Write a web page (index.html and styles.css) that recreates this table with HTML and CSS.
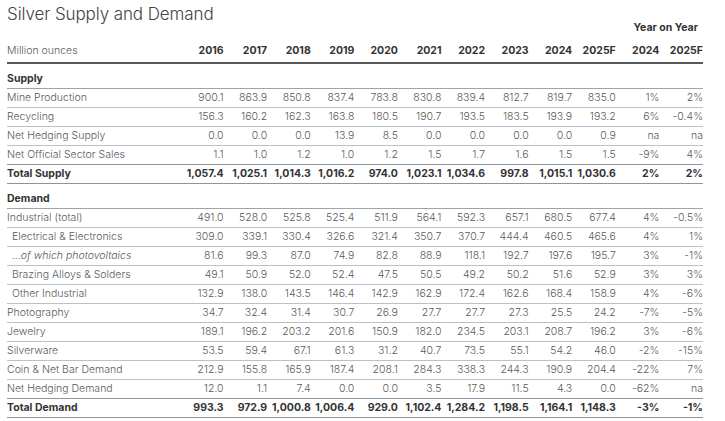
FILE: index.html
```html
<!DOCTYPE html>
<html>
<head>
<meta charset="utf-8">
<title>Silver Supply and Demand</title>
<link rel="stylesheet" href="styles.css">
</head>
<body>
<h1 class="title">Silver Supply and Demand</h1>
<table class="sd-table">
	<colgroup>
		<col class="c-lbl">
		<col span="12" class="c-num">
	</colgroup>
	<thead>
		<tr class="yoy-row">
			<th class="lbl"></th>
			<th colspan="10"></th>
			<th colspan="2" class="yoy">Year on Year</th>
		</tr>
		<tr class="head-row">
			<th class="lbl">Million ounces</th>
			<th>2016</th><th>2017</th><th>2018</th><th>2019</th><th>2020</th>
			<th>2021</th><th>2022</th><th>2023</th><th>2024</th><th>2025F</th>
			<th>2024</th><th>2025F</th>
		</tr>
	</thead>
	<tbody>
		<tr class="sec"><td class="lbl">Supply</td><td colspan="12"></td></tr>
		<tr><td class="lbl">Mine Production</td><td>900.1</td><td>863.9</td><td>850.8</td><td>837.4</td><td>783.8</td><td>830.8</td><td>839.4</td><td>812.7</td><td>819.7</td><td>835.0</td><td>1%</td><td>2%</td></tr>
		<tr><td class="lbl">Recycling</td><td>156.3</td><td>160.2</td><td>162.3</td><td>163.8</td><td>180.5</td><td>190.7</td><td>193.5</td><td>183.5</td><td>193.9</td><td>193.2</td><td>6%</td><td>-0.4%</td></tr>
		<tr><td class="lbl">Net Hedging Supply</td><td>0.0</td><td>0.0</td><td>0.0</td><td>13.9</td><td>8.5</td><td>0.0</td><td>0.0</td><td>0.0</td><td>0.0</td><td>0.9</td><td>na</td><td>na</td></tr>
		<tr class="pre-total"><td class="lbl">Net Official Sector Sales</td><td>1.1</td><td>1.0</td><td>1.2</td><td>1.0</td><td>1.2</td><td>1.5</td><td>1.7</td><td>1.6</td><td>1.5</td><td>1.5</td><td>-9%</td><td>4%</td></tr>
		<tr class="total"><td class="lbl">Total Supply</td><td>1,057.4</td><td>1,025.1</td><td>1,014.3</td><td>1,016.2</td><td>974.0</td><td>1,023.1</td><td>1,034.6</td><td>997.8</td><td>1,015.1</td><td>1,030.6</td><td>2%</td><td>2%</td></tr>
		<tr class="sec"><td class="lbl">Demand</td><td colspan="12"></td></tr>
		<tr><td class="lbl">Industrial (total)</td><td>491.0</td><td>528.0</td><td>525.8</td><td>525.4</td><td>511.9</td><td>564.1</td><td>592.3</td><td>657.1</td><td>680.5</td><td>677.4</td><td>4%</td><td>-0.5%</td></tr>
		<tr><td class="lbl sub">Electrical &amp; Electronics</td><td>309.0</td><td>339.1</td><td>330.4</td><td>326.6</td><td>321.4</td><td>350.7</td><td>370.7</td><td>444.4</td><td>460.5</td><td>465.6</td><td>4%</td><td>1%</td></tr>
		<tr><td class="lbl sub it">...of which photovoltaics</td><td>81.6</td><td>99.3</td><td>87.0</td><td>74.9</td><td>82.8</td><td>88.9</td><td>118.1</td><td>192.7</td><td>197.6</td><td>195.7</td><td>3%</td><td>-1%</td></tr>
		<tr><td class="lbl sub">Brazing Alloys &amp; Solders</td><td>49.1</td><td>50.9</td><td>52.0</td><td>52.4</td><td>47.5</td><td>50.5</td><td>49.2</td><td>50.2</td><td>51.6</td><td>52.9</td><td>3%</td><td>3%</td></tr>
		<tr><td class="lbl sub">Other Industrial</td><td>132.9</td><td>138.0</td><td>143.5</td><td>146.4</td><td>142.9</td><td>162.9</td><td>172.4</td><td>162.6</td><td>168.4</td><td>158.9</td><td>4%</td><td>-6%</td></tr>
		<tr><td class="lbl">Photography</td><td>34.7</td><td>32.4</td><td>31.4</td><td>30.7</td><td>26.9</td><td>27.7</td><td>27.7</td><td>27.3</td><td>25.5</td><td>24.2</td><td>-7%</td><td>-5%</td></tr>
		<tr><td class="lbl">Jewelry</td><td>189.1</td><td>196.2</td><td>203.2</td><td>201.6</td><td>150.9</td><td>182.0</td><td>234.5</td><td>203.1</td><td>208.7</td><td>196.2</td><td>3%</td><td>-6%</td></tr>
		<tr><td class="lbl">Silverware</td><td>53.5</td><td>59.4</td><td>67.1</td><td>61.3</td><td>31.2</td><td>40.7</td><td>73.5</td><td>55.1</td><td>54.2</td><td>46.0</td><td>-2%</td><td>-15%</td></tr>
		<tr><td class="lbl">Coin &amp; Net Bar Demand</td><td>212.9</td><td>155.8</td><td>165.9</td><td>187.4</td><td>208.1</td><td>284.3</td><td>338.3</td><td>244.3</td><td>190.9</td><td>204.4</td><td>-22%</td><td>7%</td></tr>
		<tr class="pre-total"><td class="lbl">Net Hedging Demand</td><td>12.0</td><td>1.1</td><td>7.4</td><td>0.0</td><td>0.0</td><td>3.5</td><td>17.9</td><td>11.5</td><td>4.3</td><td>0.0</td><td>-62%</td><td>na</td></tr>
		<tr class="total"><td class="lbl">Total Demand</td><td>993.3</td><td>972.9</td><td>1,000.8</td><td>1,006.4</td><td>929.0</td><td>1,102.4</td><td>1,284.2</td><td>1,198.5</td><td>1,164.1</td><td>1,148.3</td><td>-3%</td><td>-1%</td></tr>
	</tbody>
</table>
</body>
</html>
```

FILE: styles.css
```css
*{margin: 0;padding: 0;}
body{font-family: Inter, "Noto Sans", sans-serif;font-size: 10.5px;color: #5a5a5a;background-color: #fff;padding: 6px 7px 0;}
.title{font-size: 17px;font-weight: 300;line-height: 17px;color: #444;letter-spacing: -0.1px;}
.sd-table{width: 696px;border-collapse: separate;border-spacing: 0;table-layout: fixed;}
.c-lbl{width: 173px;}
.c-num{width: 43.58px;}
.sd-table th,.sd-table td{text-align: right;padding: 0;white-space: nowrap;font-weight: 300;}
.sd-table .lbl{text-align: left;}
.sd-table th{font-weight: 700;color: #333;}
.sd-table th.lbl{font-weight: 300;color: #5a5a5a;}
.yoy-row th{height: 10px;line-height: 10px;}
.yoy-row th.yoy{padding-right: 5px;}
.head-row th{height: 27px;line-height: 18px;padding-bottom: 2px;vertical-align: bottom;border-bottom: 2px solid #595959;}
.sd-table td{height: 18px;line-height: 18px;border-bottom: 1px solid #b9c2c9;}
.sd-table tr.sec td{height: 24px;vertical-align: bottom;font-weight: 700;color: #333;border-bottom-color: #9aa5ae;}
.sd-table tr.pre-total td{border-bottom-color: #8c969f;}
.sd-table tr.total td{font-weight: 700;color: #333;border-bottom-color: #8c969f;}
.sd-table .sub{padding-left: 5px;}
.sd-table .it{font-style: italic;}
```
